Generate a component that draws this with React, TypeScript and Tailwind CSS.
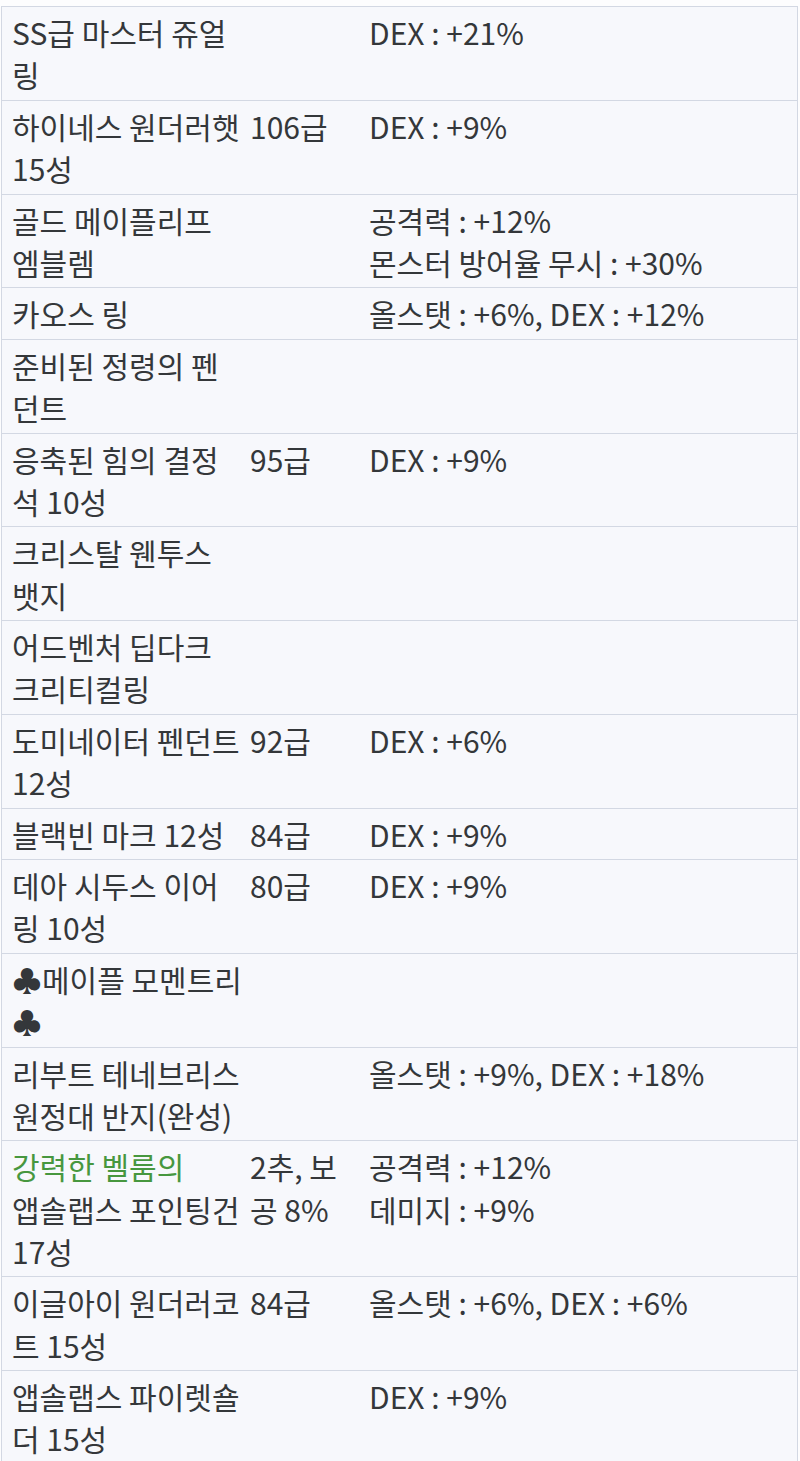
import React from "react";

type Row = {
    name: React.ReactNode;
    grade?: string;
    stats?: string[];
};

const rows: Row[] = [
    { name: "SS급 마스터 쥬얼링", stats: ["DEX : +21%"] },
    { name: "하이네스 원더러햇 15성", grade: "106급", stats: ["DEX : +9%"] },
    { name: "골드 메이플리프 엠블렘", stats: ["공격력 : +12%", "몬스터 방어율 무시 : +30%"] },
    { name: "카오스 링", stats: ["올스탯 : +6%, DEX : +12%"] },
    { name: "준비된 정령의 펜던트" },
    { name: "응축된 힘의 결정석 10성", grade: "95급", stats: ["DEX : +9%"] },
    { name: "크리스탈 웬투스 뱃지" },
    { name: "어드벤처 딥다크 크리티컬링" },
    { name: "도미네이터 펜던트 12성", grade: "92급", stats: ["DEX : +6%"] },
    { name: "블랙빈 마크 12성", grade: "84급", stats: ["DEX : +9%"] },
    { name: "데아 시두스 이어링 10성", grade: "80급", stats: ["DEX : +9%"] },
    { name: "♣메이플 모멘트리♣" },
    { name: "리부트 테네브리스 원정대 반지(완성)", stats: ["올스탯 : +9%, DEX : +18%"] },
    {
        name: (
            <>
                <span className="text-[#47973f]">강력한 벨룸의</span>
                <br />
                앱솔랩스 포인팅건 17성
            </>
        ),
        grade: "2추, 보공 8%",
        stats: ["공격력 : +12%", "데미지 : +9%"],
    },
    { name: "이글아이 원더러코트 15성", grade: "84급", stats: ["올스탯 : +6%, DEX : +6%"] },
    { name: "앱솔랩스 파이렛숄더 15성", stats: ["DEX : +9%"] },
];

export default function App() {
    return (
        <div
            className="min-h-[1461px] w-[800px] overflow-hidden bg-[#fdfdfe] pt-[6px] text-[30px] leading-[42.25px] text-[#34373a]"
            style={{ fontFamily: '"Noto Sans CJK KR", "Noto Sans", sans-serif' }}
        >
            <div className="ml-[1px] w-[797px] border-x border-t border-[#d3d8e3] bg-[#f7f8fc]">
                {rows.map((r, i) => (
                    <div key={i} className="grid grid-cols-[244px_114px_1fr] border-b border-[#d3d8e3]">
                        <div className="py-[4.125px] pl-[10px]">{r.name}</div>
                        <div className="py-[4.125px] pl-[4px]">{r.grade}</div>
                        <div className="py-[4.125px] pl-[9px]">
                            {r.stats?.map((s) => (
                                <div key={s}>{s}</div>
                            ))}
                        </div>
                    </div>
                ))}
            </div>
        </div>
    );
}
